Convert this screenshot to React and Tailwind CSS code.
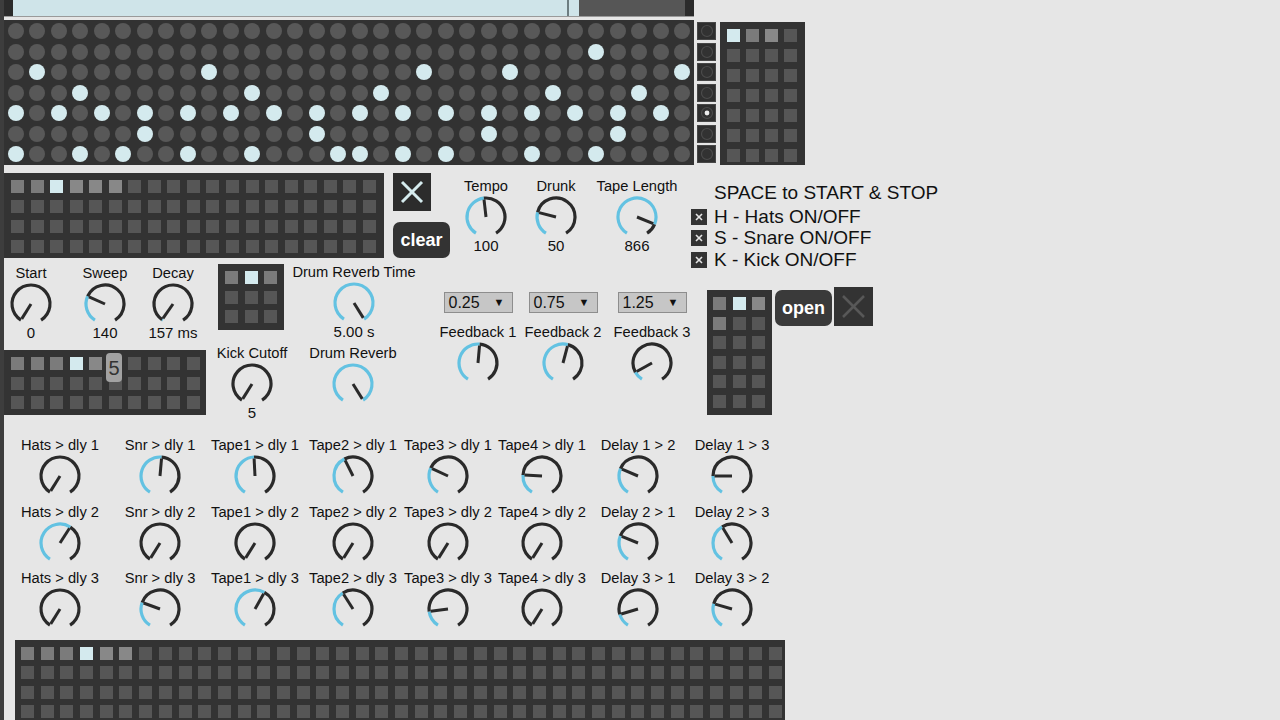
import React from 'react';

const LIT = 'bg-[#d4eaee]';
const OFF = 'bg-[#565656]';
const G1 = 'bg-[#7b7b7b]';
const G2 = 'bg-[#888888]';

// lit dots of the step sequencer, per row
const dots = [
  [],
  [27],
  [1, 9, 19, 23, 31],
  [3, 11, 17, 25, 29],
  [0, 2, 4, 6, 8, 10, 12, 14, 16, 18, 20, 22, 24, 26, 28, 30],
  [6, 14, 22, 28],
  [0, 3, 5, 8, 11, 15, 16, 18, 20, 24, 27],
];

const sends = [
  ['Hats > dly 1', 0], ['Snr > dly 1', 0.517], ['Tape1 > dly 1', 0.49], ['Tape2 > dly 1', 0.41],
  ['Tape3 > dly 1', 0.28], ['Tape4 > dly 1', 0.206], ['Delay 1 > 2', 0.274], ['Delay 1 > 3', 0.196],
  ['Hats > dly 2', 0.611], ['Snr > dly 2', 0], ['Tape1 > dly 2', 0], ['Tape2 > dly 2', 0],
  ['Tape3 > dly 2', 0], ['Tape4 > dly 2', 0], ['Delay 2 > 1', 0.27], ['Delay 2 > 3', 0.394],
  ['Hats > dly 3', 0], ['Snr > dly 3', 0.264], ['Tape1 > dly 3', 0.6], ['Tape2 > dly 3', 0.39],
  ['Tape3 > dly 3', 0.17], ['Tape4 > dly 3', 0], ['Delay 3 > 1', 0.14], ['Delay 3 > 2', 0.25],
];

function Dial({ v }) {
  const cx = 22, cy = 22, r = 19, R = 148;
  const pt = (deg, rad = r) => {
    const a = (deg * Math.PI) / 180;
    return [cx + rad * Math.sin(a), cy - rad * Math.cos(a)];
  };
  const a1 = -R + v * 2 * R;
  const arc = (s, e) => {
    if (e - s < 0.5) return null;
    const [x1, y1] = pt(s);
    const [x2, y2] = pt(e);
    return `M${x1} ${y1} A${r} ${r} 0 ${e - s > 180 ? 1 : 0} 1 ${x2} ${y2}`;
  };
  const blue = arc(-R, a1);
  const rest = arc(a1, R);
  const [nx, ny] = pt(a1, 17.5);
  return (
    <svg width="44" height="44" viewBox="0 0 44 44">
      {blue && <path d={blue} stroke="#63c2e2" strokeWidth="3.2" fill="none" />}
      {rest && <path d={rest} stroke="#2a2a2a" strokeWidth="3.2" fill="none" />}
      <line x1={cx} y1={cy} x2={nx} y2={ny} stroke="#2a2a2a" strokeWidth="3" />
    </svg>
  );
}

function Knob({ label, value, v, className = '' }) {
  return (
    <div className={`flex flex-col items-center ${className}`}>
      <div className="h-[17px] whitespace-nowrap text-[14.7px] leading-[17px]">{label}</div>
      <Dial v={v} />
      {value !== undefined && <div className="-mt-[2px] h-[17px] whitespace-nowrap text-[15px] leading-[17px]">{value}</div>}
    </div>
  );
}

function Pads({ count, first = {}, className, cell = 'h-[13px] w-[13px]' }) {
  return (
    <div className={`grid bg-[#333333] ${className}`}>
      {Array.from({ length: count }).map((_, i) => (
        <div key={i} className={`${cell} ${first[i] || OFF}`} />
      ))}
    </div>
  );
}

function Cross({ size, color, width, pad }) {
  return (
    <svg width={size} height={size} viewBox={`0 0 ${size} ${size}`}>
      <line x1={pad} y1={pad} x2={size - pad} y2={size - pad} stroke={color} strokeWidth={width} />
      <line x1={size - pad} y1={pad} x2={pad} y2={size - pad} stroke={color} strokeWidth={width} />
    </svg>
  );
}

function SideCell({ active }) {
  return (
    <div className="flex h-[18px] w-[19px] items-center justify-center border border-[#474747] bg-[#2f2f2f]">
      <svg width="14" height="14" viewBox="0 0 14 14">
        <circle cx="7" cy="7" r="5.5" fill="#323232" stroke="#4b4b4b" strokeWidth="1.2" />
        {active && <circle cx="7" cy="7" r="2.4" fill="#ececec" />}
      </svg>
    </div>
  );
}

function Toggle({ text }) {
  return (
    <div className="flex h-[21.5px] items-center">
      <div className="flex h-4 w-4 items-center justify-center bg-[#333333]">
        <Cross size={16} color="#e6e6e6" width={1.6} pad={5} />
      </div>
      <span className="ml-[7px]">{text}</span>
    </div>
  );
}

function Menu({ value }) {
  return (
    <div className="flex h-[21px] w-[69px] items-center justify-between border border-[#8d8d8d] bg-[#c6c6c6] pl-[4px] pr-[7px] text-[16px] leading-none">
      <span>{value}</span>
      <span className="text-[11px]">▼</span>
    </div>
  );
}

export default function App() {
  return (
    <div className="h-[720px] w-[1280px] overflow-hidden border-l-4 border-[#3d3d3d] bg-[#e6e6e6] font-['Liberation_Sans',Arial,sans-serif] text-[#111111]">
      {/* transport bar */}
      <div className="flex h-[17px] w-[690px] border-b border-[#9a9a9a]">
        <div className="w-[9px] bg-[#2b2b2b]" />
        <div className="w-[554px] bg-[#cfe4e9]" />
        <div className="w-[2px] bg-[#6d7d81]" />
        <div className="w-[10px] bg-[#cfe4e9]" />
        <div className="w-[106px] bg-[#565656]" />
        <div className="flex-1 bg-[#2b2b2b]" />
      </div>

      {/* sequencer */}
      <div className="mt-[3px] flex items-start">
        <div className="grid h-[145px] w-[690px] grid-cols-[repeat(32,21.5px)] grid-rows-[repeat(7,20.5px)] bg-[#323232] pl-[1px] pt-[1px]">
          {Array.from({ length: 7 * 32 }).map((_, i) => {
            const on = dots[Math.floor(i / 32)].includes(i % 32);
            return (
              <div key={i} className="flex items-center justify-center">
                <div className={`h-4 w-4 rounded-full ${on ? LIT : 'bg-[#585858]'}`} />
              </div>
            );
          })}
        </div>
        <div className="ml-[3px] mt-[2px] flex flex-col gap-[2.5px]">
          {[0, 1, 2, 3, 4, 5, 6].map((i) => <SideCell key={i} active={i === 4} />)}
        </div>
        <Pads
          count={28}
          first={{ 0: LIT, 1: G1, 2: G2 }}
          className="ml-[4px] mt-[2px] h-[143px] w-[85px] grid-cols-[repeat(4,13px)] content-start gap-x-[6.3px] gap-y-[7px] px-[6.5px] pt-[6.5px]"
        />
      </div>

      {/* pattern row + tempo */}
      <div className="mt-[8px] flex h-[91px] items-start">
        <Pads
          count={76}
          first={{ 0: G1, 1: G1, 2: LIT, 3: G2, 4: G2, 5: G2 }}
          className="h-[85px] w-[380px] grid-cols-[repeat(19,13px)] content-start gap-x-[6.55px] gap-y-[7px] px-[7px] pt-[7px]"
        />
        <div className="ml-[9px] flex flex-col">
          <div className="flex h-[38px] w-[38px] items-center justify-center bg-[#2c2c2c]">
            <Cross size={38} color="#d5ebee" width={3} pad={9} />
          </div>
          <div className="mt-[11px] flex h-[36px] w-[57px] items-center justify-center rounded-[7px] bg-[#333333] text-[18px] font-bold text-white">
            clear
          </div>
        </div>
        <Knob className="ml-[6px] mt-[5px] w-[60px]" label="Tempo" value="100" v={0.478} />
        <Knob className="ml-[10px] mt-[5px] w-[60px]" label="Drunk" value="50" v={0.245} />
        <Knob className="ml-[9px] mt-[5px] w-[84px]" label="Tape Length" value="866" v={0.88} />
        <div className="ml-[12px] mt-[9px] whitespace-nowrap text-[19px] leading-[22px]">
          <div className="pl-[23px]">SPACE to START &amp; STOP</div>
          <div className="mt-[2px] flex flex-col">
            <Toggle text="H - Hats ON/OFF" />
            <Toggle text="S - Snare ON/OFF" />
            <Toggle text="K - Kick ON/OFF" />
          </div>
        </div>
      </div>

      {/* drums + delays */}
      <div className="flex h-[157px] items-start">
        <div className="w-[434px] shrink-0">
          <div className="flex items-start">
            <Knob className="ml-[2px] mt-[1px] w-[50px]" label="Start" value="0" v={0} />
            <Knob className="ml-[24px] mt-[1px] w-[50px]" label="Sweep" value="140" v={0.277} />
            <Knob className="ml-[13px] mt-[1px] w-[60px]" label="Decay" value="157 ms" v={0.01} />
            <Pads
              count={9}
              first={{ 0: G1, 1: LIT, 2: G1 }}
              className="ml-[15px] h-[66px] w-[66px] grid-cols-[repeat(3,13px)] content-start gap-[6.5px] p-[7px]"
            />
            <Knob className="ml-[5px] w-[130px]" label="Drum Reverb Time" value="5.00 s" v={1} />
          </div>
          <div className="mt-[4px] flex items-start">
            <div className="relative mt-[5px]">
              <Pads
                count={30}
                first={{ 0: G1, 1: G1, 2: G1, 3: LIT, 4: G2 }}
                className="h-[65px] w-[202px] grid-cols-[repeat(10,13px)] content-start gap-x-[6.5px] gap-y-[6.5px] px-[7px] pt-[7px]"
              />
              <div className="absolute left-[102px] top-[3px] flex h-[29px] w-[16px] items-center justify-center rounded-[4px] bg-[#a2a2a2] text-[20px] text-[#333333]">
                5
              </div>
            </div>
            <Knob className="ml-[1px] w-[90px]" label="Kick Cutoff" value="5" v={0} />
            <Knob className="ml-[6px] w-[100px]" label="Drum Reverb" v={1} />
          </div>
        </div>

        <div className="flex w-[80px] flex-col items-center">
          <div className="mt-[28px]"><Menu value="0.25" /></div>
          <Knob className="mt-[11px] w-[80px]" label="Feedback 1" v={0.517} />
        </div>
        <div className="ml-[5px] flex w-[80px] flex-col items-center">
          <div className="mt-[28px]"><Menu value="0.75" /></div>
          <Knob className="mt-[11px] w-[80px]" label="Feedback 2" v={0.55} />
        </div>
        <div className="ml-[9px] flex w-[80px] flex-col items-center">
          <div className="mt-[28px]"><Menu value="1.25" /></div>
          <Knob className="mt-[11px] w-[80px]" label="Feedback 3" v={0.098} />
        </div>
        <Pads
          count={18}
          first={{ 0: G1, 1: LIT, 2: G2, 3: G1 }}
          className="ml-[15px] mt-[26px] h-[125px] w-[65px] grid-cols-[repeat(3,13px)] content-start gap-x-[6.5px] gap-y-[6.6px] px-[6px] pt-[7px]"
        />
        <div className="ml-[3px] mt-[26px] flex h-[36px] w-[57px] items-center justify-center rounded-[7px] bg-[#3a3a3a] text-[18px] font-bold text-white">
          open
        </div>
        <div className="ml-[2px] mt-[23px] flex h-[39px] w-[39px] items-center justify-center bg-[#333333]">
          <Cross size={39} color="#585858" width={2.5} pad={9} />
        </div>
      </div>

      {/* send matrix */}
      <div className="ml-[6px] mt-[16px] grid grid-cols-[100px_100px_90px_106px_84px_104px_88px_100px] gap-y-[5.5px]">
        {sends.map(([label, v]) => (
          <Knob key={label} label={label} v={v} />
        ))}
      </div>

      {/* long pattern */}
      <Pads
        count={156}
        first={{ 0: G1, 1: G1, 2: G1, 3: LIT, 4: G2, 5: G2 }}
        className="ml-[11px] mt-[9px] h-[90px] w-[770px] grid-cols-[repeat(39,13px)] content-start gap-x-[6.7px] gap-y-[6.5px] px-[6px] pt-[6.5px]"
      />
    </div>
  );
}
